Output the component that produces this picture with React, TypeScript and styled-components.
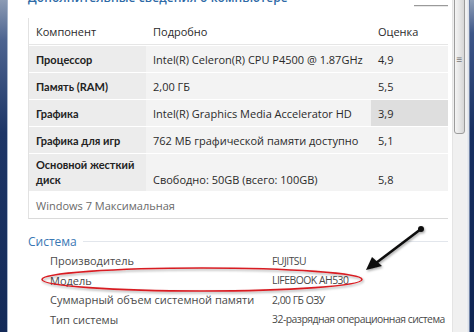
import React from 'react';
import styled, { createGlobalStyle } from 'styled-components';

const GlobalStyle = createGlobalStyle`
  html, body {
    margin: 0;
    padding: 0;
    background: #ffffff;
  }
  body {
    font-family: 'Open Sans', 'Noto Sans', sans-serif;
  }
`;

interface Row {
  name: string;
  detail: string;
  score: string;
  tall?: boolean;
  active?: boolean;
}

const rows: Row[] = [
  { name: 'Процессор', detail: 'Intel(R) Celeron(R) CPU P4500 @ 1.87GHz', score: '4,9' },
  { name: 'Память (RAM)', detail: '2,00 ГБ', score: '5,5' },
  { name: 'Графика', detail: 'Intel(R) Graphics Media Accelerator HD', score: '3,9', active: true },
  { name: 'Графика для игр', detail: '762 МБ графической памяти доступно', score: '5,1' },
  { name: 'Основной жесткий диск', detail: 'Свободно: 50GB (всего: 100GB)', score: '5,8', tall: true },
];

const system = [
  ['Производитель', 'FUJITSU'],
  ['Модель', 'LIFEBOOK AH530'],
  ['Суммарный объем системной памяти', '2,00 ГБ ОЗУ'],
  ['Тип системы', '32-разрядная операционная система'],
];

const App: React.FC = () => {
  return (
    <>
      <GlobalStyle />
      <Window>
        <Frame side="left" />
        <Content>
          <TitleRow>
            <Title>Дополнительные сведения о компьютере</Title>
            <TopButton />
          </TitleRow>
          <Table>
            <HeadCell>Компонент</HeadCell>
            <HeadCell>Подробно</HeadCell>
            <HeadCell>Оценка</HeadCell>
            {rows.map((r) => (
              <React.Fragment key={r.name}>
                <NameCell tall={r.tall}>{r.name}</NameCell>
                <Cell tall={r.tall}>{r.detail}</Cell>
                <Cell tall={r.tall} active={r.active}>{r.score}</Cell>
              </React.Fragment>
            ))}
            <Edition>Windows 7 Максимальная</Edition>
          </Table>
          <Section>
            <SectionTitle>Система</SectionTitle>
            <SectionLine />
          </Section>
          <Props>
            {system.map(([k, v]) => (
              <React.Fragment key={k}>
                <PropName>{k}</PropName>
                <PropValue>{v}</PropValue>
              </React.Fragment>
            ))}
          </Props>
          <Marks viewBox="0 0 466 332" width="466" height="332">
            <defs>
              <filter id="sh" x="-10%" y="-30%" width="120%" height="160%">
                <feDropShadow dx="1" dy="1.5" stdDeviation="1.2" floodColor="#000" floodOpacity="0.35" />
              </filter>
            </defs>
            <ellipse cx="202" cy="279.5" rx="160" ry="11.5" fill="none" stroke="#d81e24" strokeWidth="1.6" filter="url(#sh)" />
            <g filter="url(#sh)">
              <line x1="421" y1="229" x2="376" y2="263" stroke="#111" strokeWidth="2.6" strokeLinecap="round" />
              <circle cx="421" cy="229" r="3" fill="#111" />
              <polygon points="366,270 372,257 382,266" fill="#111" />
            </g>
          </Marks>
        </Content>
        <Scrollbar>
          <Thumb>
            <Grip>≡</Grip>
          </Thumb>
        </Scrollbar>
        <Gap />
        <Frame side="right" />
      </Window>
    </>
  );
};

const Window = styled.div`
  display: flex;
  width: 474px;
  height: 332px;
  overflow: hidden;
  background: #ffffff;
`;

const Frame = styled.div<{ side: 'left' | 'right' }>`
  width: ${(p) => (p.side === 'left' ? '8px' : '5px')};
  flex-shrink: 0;
  background: ${(p) =>
    p.side === 'left'
      ? 'linear-gradient(180deg, #8c9bb4 0%, #4d6490 12%, #1d3566 40%, #132a58 100%)'
      : 'linear-gradient(180deg, #8f9fb8 0%, #3d5688 10%, #172f60 40%, #0f2452 100%)'};
  box-shadow: ${(p) => (p.side === 'left' ? 'inset -1px 0 0 #a8b6cc' : 'inset 1px 0 0 #6f82a6')};
`;

const Content = styled.div`
  position: relative;
  flex: 1;
  padding: 0 4px 0 20px;
  color: #333;
`;

const TitleRow = styled.div`
  display: flex;
  align-items: flex-start;
  justify-content: space-between;
  height: 28px;
  margin-top: -10px;
`;

const Title = styled.div`
  font-size: 12px;
  line-height: 15px;
  letter-spacing: 0.1px;
  font-weight: 600;
  color: #2e6aa6;
`;

const TopButton = styled.div`
  width: 34px;
  height: 15px;
  border-bottom: 1px solid #9a9a9a;
  box-shadow: 0 1px 0 #e8e8e8;
`;

const Table = styled.div`
  display: grid;
  grid-template-columns: 117px 225px 1fr;
  row-gap: 1px;
  border-left: 1px solid #e2e2e2;
  border-bottom: 1px solid #dadada;
  background: #ffffff;
  font-size: 11px;

  & > div {
    box-sizing: border-box;
  }
`;

const HeadCell = styled.div`
  height: 27px;
  display: flex;
  align-items: center;
  padding-left: 7px;
  color: #2a2a2a;
  background: #ffffff;
  border-bottom: 1px solid #e6e6e6;
`;

const Cell = styled.div<{ tall?: boolean; active?: boolean }>`
  height: ${(p) => (p.tall ? '37px' : '26px')};
  display: flex;
  align-items: ${(p) => (p.tall ? 'flex-end' : 'center')};
  padding: ${(p) => (p.tall ? '0 0 4px 7px' : '0 0 0 7px')};
  background: ${(p) => (p.active ? '#dedede' : '#f3f3f3')};
  color: #2a2a2a;
  line-height: 15px;
`;

const NameCell = styled(Cell)`
  background: #ececec;
  font-family: 'Lato', 'Open Sans', sans-serif;
  font-size: 11px;
  font-weight: 700;
  color: #222;
`;

const Edition = styled.div`
  grid-column: 1 / -1;
  height: 26px;
  display: flex;
  align-items: center;
  padding-left: 7px;
  color: #6a6a6a;
  background: #ffffff;
`;

const Section = styled.div`
  display: flex;
  align-items: center;
  gap: 6px;
  margin-top: 12px;
  height: 20px;
`;

const SectionTitle = styled.div`
  font-size: 12px;
  color: #3a78b4;
`;

const SectionLine = styled.div`
  flex: 1;
  height: 1px;
  background: #e2e6ec;
`;

const Props = styled.div`
  display: grid;
  grid-template-columns: 222px 1fr;
  grid-auto-rows: 19.5px;
  padding-left: 22px;
  font-size: 11px;
  color: #4a4a4a;
  align-items: center;
  white-space: nowrap;
`;

const PropName = styled.div``;

const PropValue = styled.div`
  font-size: 10.4px;
  letter-spacing: -0.5px;
`;

const Marks = styled.svg`
  position: absolute;
  left: -8px;
  top: 0;
  pointer-events: none;
`;

const Scrollbar = styled.div`
  width: 14px;
  flex-shrink: 0;
  background: #f0f0f0;
  border-left: 1px solid #e4e4e4;
  box-sizing: border-box;
`;

const Thumb = styled.div`
  height: 148px;
  margin: -16px 1px 0 1px;
  border: 1px solid #9c9c9c;
  border-radius: 3px;
  background: linear-gradient(90deg, #f4f4f4 0%, #e6e6e6 50%, #d6d6d6 100%);
  display: flex;
  align-items: center;
  justify-content: center;
`;

const Grip = styled.span`
  font-size: 10px;
  color: #777;
  line-height: 1;
`;

const Gap = styled.div`
  width: 3px;
  flex-shrink: 0;
  background: linear-gradient(90deg, #f6f6f6, #d8dde6);
`;

export default App;
